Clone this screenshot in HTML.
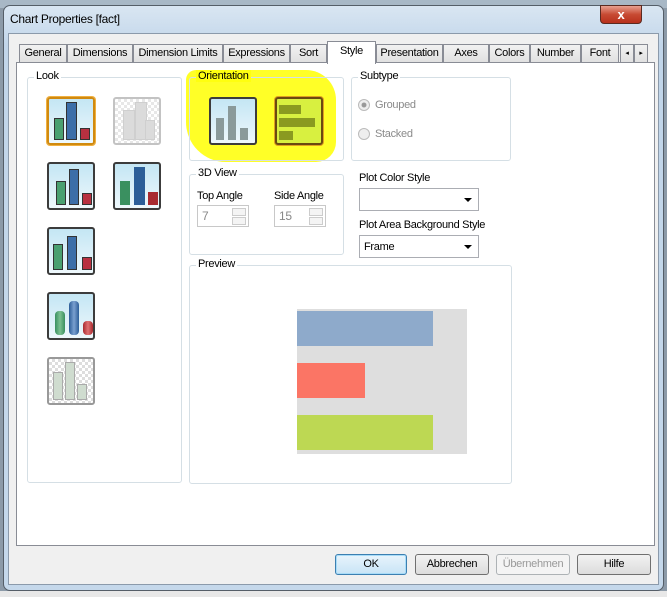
<!DOCTYPE html>
<html><head><meta charset="utf-8"><style>
*{box-sizing:border-box;margin:0;padding:0}
body{width:667px;height:597px;overflow:hidden;background:#8c9aa8;font-family:"Liberation Sans",sans-serif;font-size:11px;letter-spacing:-0.3px;color:#000;position:relative}
.a{position:absolute}
.grp{position:absolute;border:1px solid #d5dfe5;border-radius:3px}
.grp>span{position:absolute;top:-8px;left:6px;background:#fff;padding:0 2px;font-size:11px}
.tab{position:absolute;top:44px;height:19px;border:1px solid #898c95;border-bottom:none;background:linear-gradient(#f2f2f2,#e0e0e0);font-size:11px;text-align:center;line-height:17px}
.ic{position:absolute;width:48px;height:48px;border:2px solid #3c3c3c;border-radius:3px;background:linear-gradient(#c4e6f4,#eef8fc);overflow:hidden}
.ic i{position:absolute;bottom:3px;border:1px solid #333}
.btn{position:absolute;top:554px;height:21px;border:1px solid #707070;border-radius:3px;background:linear-gradient(#f2f2f2,#dcdcdc);text-align:center;line-height:19px;font-size:11px}
.dd{position:absolute;left:359px;width:120px;height:23px;border:1px solid #abadb3;background:#fff;padding:5px 4px}
.dd:after{content:"";position:absolute;right:6px;top:9px;border:4px solid transparent;border-top:4px solid #000}
.sp{position:absolute;width:52px;height:22px;border:1px solid #c8c8c8;background:#fff;color:#888;padding:3px 4px;font-size:12px}
.sp b{position:absolute;right:2px;width:14px;height:8px;border:1px solid #ccc;background:#f4f4f4}
</style></head><body>
<div class="a" style="left:0;top:0;width:667px;height:8px;background:#a8b8c6"></div>
<div class="a" style="left:3px;top:5px;width:661px;height:586px;background:linear-gradient(#d9e6f2,#c2d6ea 40px,#c5d8eb);border:1px solid #555e68;border-radius:7px"></div>
<div class="a" style="left:10px;top:12px;font-size:12px">Chart Properties [fact]</div>
<div class="a" style="left:600px;top:5px;width:42px;height:19px;background:linear-gradient(#e8a090,#c74a32 50%,#b8301c);border:1px solid #5a2a20;border-radius:0 0 4px 4px;color:#fff;text-align:center;font-weight:bold;font-size:13px;line-height:17px">x</div>
<div class="a" style="left:8px;top:33px;width:651px;height:552px;background:#f0f0f0;border:1px solid #8b9aab"></div>
<div class="tab" style="left:19px;width:48px">General</div>
<div class="tab" style="left:67px;width:66px">Dimensions</div>
<div class="tab" style="left:133px;width:90px">Dimension Limits</div>
<div class="tab" style="left:223px;width:67px">Expressions</div>
<div class="tab" style="left:290px;width:37px">Sort</div>
<div class="tab" style="left:376px;width:67px">Presentation</div>
<div class="tab" style="left:443px;width:46px">Axes</div>
<div class="tab" style="left:489px;width:41px">Colors</div>
<div class="tab" style="left:530px;width:51px">Number</div>
<div class="tab" style="left:581px;width:38px">Font</div>
<div class="tab" style="left:620px;width:14px;font-size:7px">◂</div>
<div class="tab" style="left:634px;width:14px;font-size:7px">▸</div>
<div class="a" style="left:16px;top:62px;width:639px;height:484px;background:#fff;border:1px solid #898c95"></div>
<div class="tab" style="left:327px;top:41px;width:49px;height:23px;background:#fff;border-color:#898c95;line-height:18px;z-index:2">Style</div>

<div class="grp" style="left:27px;top:77px;width:155px;height:406px"><span>Look</span></div>
<div class="a" style="left:186px;top:70px;width:150px;height:92px;background:#ffff10;border-radius:10px 30px 20px 40px;opacity:.9"></div>
<div class="grp" style="left:189px;top:77px;width:155px;height:84px"><span style="background:#ffff10">Orientation</span></div>
<div class="grp" style="left:351px;top:77px;width:160px;height:84px"><span>Subtype</span></div>
<div class="a" style="left:358px;top:99px;width:12px;height:12px;border-radius:50%;border:1px solid #bbb;background:radial-gradient(#999 30%,#eee 40%)"></div>
<div class="a" style="left:375px;top:99px;color:#8a8a8a">Grouped</div>
<div class="a" style="left:358px;top:128px;width:12px;height:12px;border-radius:50%;border:1px solid #bbb;background:#eee"></div>
<div class="a" style="left:375px;top:128px;color:#8a8a8a">Stacked</div>
<div class="grp" style="left:189px;top:174px;width:155px;height:81px"><span>3D View</span></div>
<div class="a" style="left:197px;top:190px">Top Angle</div>
<div class="a" style="left:274px;top:190px">Side Angle</div>
<div class="sp" style="left:197px;top:205px">7<b style="top:2px"></b><b style="top:11px"></b></div>
<div class="sp" style="left:274px;top:205px">15<b style="top:2px"></b><b style="top:11px"></b></div>
<div class="a" style="left:359px;top:172px">Plot Color Style</div>
<div class="dd" style="top:188px"></div>
<div class="a" style="left:359px;top:219px">Plot Area Background Style</div>
<div class="dd" style="top:235px">Frame</div>
<div class="grp" style="left:189px;top:265px;width:323px;height:219px"><span>Preview</span></div>
<div class="a" style="left:297px;top:309px;width:170px;height:145px;background:#dedede"></div>
<div class="a" style="left:297px;top:311px;width:136px;height:35px;background:#8eaacb"></div>
<div class="a" style="left:297px;top:363px;width:68px;height:35px;background:#fb7565"></div>
<div class="a" style="left:297px;top:415px;width:136px;height:35px;background:#bdd853"></div>

<div class="ic" style="left:47px;top:97px;border-color:#d08a10;box-shadow:0 0 0 1px #f0b040"><i style="left:5px;width:10px;height:22px;background:#4aa070"></i><i style="left:17px;width:11px;height:38px;background:#3c6ea8"></i><i style="left:31px;width:10px;height:12px;background:#b83040"></i></div>
<div class="ic" style="left:113px;top:97px;border-color:#aaa;background:repeating-conic-gradient(#ddd 0 25%,#fff 0 50%) 0 0/6px 6px;opacity:.7"><i style="left:8px;width:12px;height:30px;background:#ccc;border-color:#bbb"></i><i style="left:20px;width:12px;height:38px;background:#ccc;border-color:#bbb"></i><i style="left:30px;width:10px;height:20px;background:#ccc;border-color:#bbb"></i></div>
<div class="ic" style="left:47px;top:162px"><i style="left:7px;width:10px;height:24px;background:#4aa070"></i><i style="left:20px;width:10px;height:36px;background:#3c6ea8"></i><i style="left:33px;width:10px;height:12px;background:#b83040"></i></div>
<div class="ic" style="left:113px;top:162px"><i style="left:5px;width:10px;height:24px;background:#3a9060;border:none"></i><i style="left:19px;width:11px;height:38px;background:#2c5e98;border:none"></i><i style="left:33px;width:10px;height:13px;background:#a82a30;border:none"></i></div>
<div class="ic" style="left:47px;top:227px"><i style="left:4px;width:10px;height:26px;background:#4aa070"></i><i style="left:18px;width:10px;height:34px;background:#3c6ea8"></i><i style="left:33px;width:10px;height:13px;background:#b83040"></i></div>
<div class="ic" style="left:47px;top:292px"><i style="left:6px;width:10px;height:24px;background:linear-gradient(90deg,#3a9060,#7ac090,#3a9060);border:none;border-radius:4px"></i><i style="left:20px;width:10px;height:34px;background:linear-gradient(90deg,#2c5e98,#7aa0d0,#2c5e98);border:none;border-radius:4px"></i><i style="left:34px;width:10px;height:14px;background:linear-gradient(90deg,#a82a30,#e07070,#a82a30);border:none;border-radius:4px"></i></div>
<div class="ic" style="left:47px;top:357px;border-color:#999;background:repeating-conic-gradient(#ddd 0 25%,#fff 0 50%) 0 0/6px 6px"><i style="left:4px;width:10px;height:28px;background:#cfdccf;border-color:#aaa"></i><i style="left:16px;width:10px;height:38px;background:#cfdccf;border-color:#aaa"></i><i style="left:28px;width:10px;height:16px;background:#cfdccf;border-color:#aaa"></i></div>
<div class="ic" style="left:209px;top:97px"><i style="left:5px;width:8px;height:22px;background:#8a9a9a;border:none"></i><i style="left:17px;width:8px;height:34px;background:#8a9a9a;border:none"></i><i style="left:29px;width:8px;height:12px;background:#8a9a9a;border:none"></i></div>
<div class="ic" style="left:275px;top:97px;background:#d8f040;border-color:#6a4a10;box-shadow:0 0 0 1px #e0a020"><i style="left:2px;top:6px;bottom:auto;width:22px;height:9px;background:#8a9a20;border:none"></i><i style="left:2px;top:19px;bottom:auto;width:36px;height:9px;background:#8a9a20;border:none"></i><i style="left:2px;top:32px;bottom:auto;width:14px;height:9px;background:#8a9a20;border:none"></i></div>

<div class="btn" style="left:335px;width:72px;border-color:#3c7fb1;box-shadow:inset 0 0 0 1px #a8dcf8;background:linear-gradient(#e8f4fc,#c8e4f6)">OK</div>
<div class="btn" style="left:415px;width:74px">Abbrechen</div>
<div class="btn" style="left:496px;width:74px;color:#999;border-color:#adb2b5;background:#f4f4f4">Übernehmen</div>
<div class="btn" style="left:577px;width:74px">Hilfe</div>
<div class="a" style="left:0;top:591px;width:667px;height:6px;background:#e8e8e8"></div>
</body></html>
